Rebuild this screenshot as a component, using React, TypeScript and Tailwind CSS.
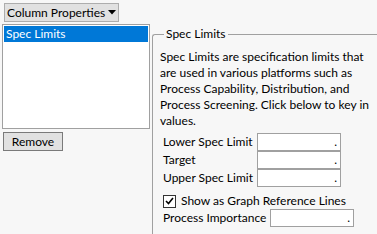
import React from "react";

const font = { fontFamily: 'Lato, "Noto Sans", sans-serif' };

function Box({ w }: { w: string }) {
  return (
    <div className={`${w} h-[18px] bg-white border border-[#a0a0a0] relative`}>
      <span className="absolute right-[3px] bottom-[2px] leading-none">.</span>
    </div>
  );
}

export default function App() {
  return (
    <div
      className="w-[377px] h-[234px] bg-[#f7f7f7] flex text-[12px] leading-[16px] text-black overflow-hidden whitespace-nowrap"
      style={font}
    >
      <div className="w-[152px] shrink-0 flex flex-col pt-[3px] pl-[2px]">
        <div className="ml-[2px] w-[115px] h-[19px] bg-[#e1e1e1] border border-[#adadad] flex items-center justify-between pl-[2px] pr-[2px]">
          <span>Column Properties</span>
          <svg width="8" height="5" viewBox="0 0 8 5">
            <path d="M0 0 L8 0 L4 4.5 Z" fill="#000" />
          </svg>
        </div>
        <div className="mt-[2px] w-[148px] h-[105px] bg-white border border-[#a0a0a0] p-[1px]">
          <div className="h-[16px] bg-[#0078d7] text-white pl-[2px] flex items-center">Spec Limits</div>
        </div>
        <div className="mt-[3px] ml-[1px] w-[60px] h-[19px] bg-[#e1e1e1] border border-[#7a7a7a] flex items-center justify-center">
          Remove
        </div>
      </div>
      <div className="flex-1 pt-[26px]">
        <fieldset className="h-full border-l border-t border-[#a0a0a0] rounded-tl-[3px] pl-[7px] pr-[4px]">
          <legend className="ml-[4px] px-[2px]">Spec Limits</legend>
          <p className="mt-[7px] text-[#000]">
            Spec Limits are specification limits that
            <br />
            are used in various platforms such as
            <br />
            Process Capability, Distribution, and
            <br />
            Process Screening. Click below to key in
            <br />
            values.
          </p>
          <div className="mt-[4px] ml-[3px] flex flex-col">
            {["Lower Spec Limit", "Target", "Upper Spec Limit"].map((l) => (
              <div key={l} className="flex items-center">
                <span className="w-[94px]">{l}</span>
                <Box w="w-[84px]" />
              </div>
            ))}
          </div>
          <div className="mt-[6px] ml-[3px] flex items-center gap-[5px]">
            <div className="w-[13px] h-[13px] bg-white border border-[#333] flex items-center justify-center">
              <svg width="9" height="8" viewBox="0 0 9 8">
                <path d="M1 4 L3.5 6.5 L8 1" stroke="#000" strokeWidth="1.6" fill="none" />
              </svg>
            </div>
            <span>Show as Graph Reference Lines</span>
          </div>
          <div className="ml-[3px] flex items-center">
            <span className="w-[107px]">Process Importance</span>
            <Box w="w-[84px]" />
          </div>
        </fieldset>
      </div>
    </div>
  );
}
